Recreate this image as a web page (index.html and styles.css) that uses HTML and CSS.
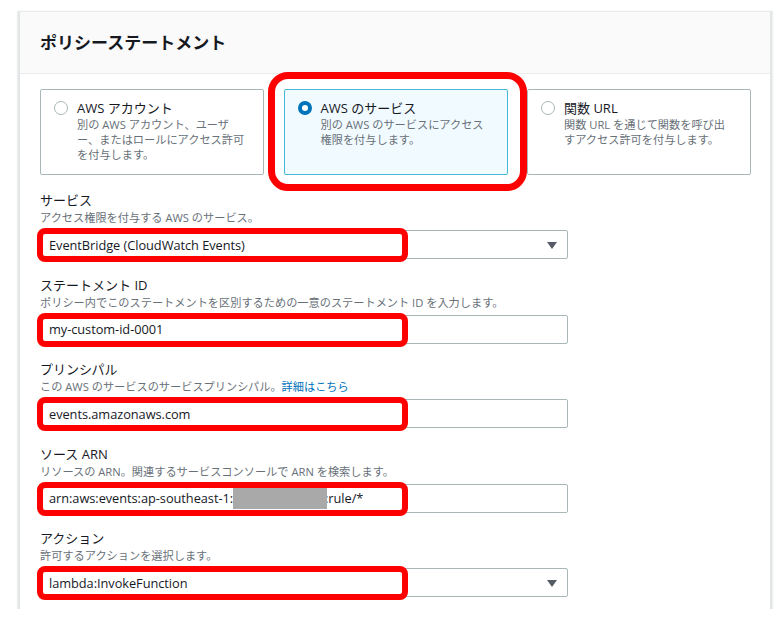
FILE: index.html
```html
<!DOCTYPE html>
<html lang="ja">
<head>
<meta charset="utf-8">
<title>ポリシーステートメント</title>
<link rel="stylesheet" href="styles.css">
</head>
<body>
<div class="page">
  <section class="panel">
    <header class="panel-header">
      <h2 class="panel-title">ポリシーステートメント</h2>
    </header>
    <div class="panel-body">
      <div class="cards">
        <div class="card">
          <span class="radio"></span>
          <div class="card-text">
            <div class="card-title">AWS アカウント</div>
            <div class="card-desc">別の AWS アカウント、ユーザ<br>ー、またはロールにアクセス許可<br>を付与します。</div>
          </div>
        </div>
        <div class="card card-selected">
          <span class="radio radio-on"></span>
          <div class="card-text">
            <div class="card-title">AWS のサービス</div>
            <div class="card-desc">別の AWS のサービスにアクセス<br>権限を付与します。</div>
          </div>
          <span class="mark mark-card"></span>
        </div>
        <div class="card">
          <span class="radio"></span>
          <div class="card-text">
            <div class="card-title">関数 URL</div>
            <div class="card-desc">関数 URL を通じて関数を呼び出<br>すアクセス許可を付与します。</div>
          </div>
        </div>
      </div>

      <div class="fields">
        <div class="field">
          <div class="field-label">サービス</div>
          <div class="field-desc">アクセス権限を付与する AWS のサービス。</div>
          <div class="control select">
            <span class="value">EventBridge (CloudWatch Events)</span>
            <span class="caret"></span>
            <span class="mark mark-field"></span>
          </div>
        </div>
        <div class="field">
          <div class="field-label">ステートメント ID</div>
          <div class="field-desc">ポリシー内でこのステートメントを区別するための一意のステートメント ID を入力します。</div>
          <div class="control">
            <span class="value">my-custom-id-0001</span>
            <span class="mark mark-field"></span>
          </div>
        </div>
        <div class="field">
          <div class="field-label">プリンシパル</div>
          <div class="field-desc">この AWS のサービスのサービスプリンシパル。<a class="link" href="#">詳細はこちら</a></div>
          <div class="control">
            <span class="value">events.amazonaws.com</span>
            <span class="mark mark-field"></span>
          </div>
        </div>
        <div class="field">
          <div class="field-label">ソース ARN</div>
          <div class="field-desc">リソースの ARN。関連するサービスコンソールで ARN を検索します。</div>
          <div class="control">
            <span class="value">arn:aws:events:ap-southeast-1:<span class="redact"></span><span class="tail">:rule/*</span></span>
            <span class="mark mark-field"></span>
          </div>
        </div>
        <div class="field">
          <div class="field-label">アクション</div>
          <div class="field-desc">許可するアクションを選択します。</div>
          <div class="control select">
            <span class="value">lambda:InvokeFunction</span>
            <span class="caret"></span>
            <span class="mark mark-field"></span>
          </div>
        </div>
      </div>
    </div>
  </section>
</div>
</body>
</html>
```

FILE: styles.css
```css
* { box-sizing: border-box; }

html, body {
  margin: 0;
  padding: 0;
  background: #ffffff;
}

body {
  font-family: "Open Sans", "Noto Sans CJK JP", sans-serif;
  color: #16191f;
}

.page {
  padding: 11px 0 0 18px;
}

.panel {
  width: 754px;
  height: 598px;
  background: #ffffff;
  border-top: 1px solid #e9ecec;
  border-left: 2px solid #e2e6e6;
  border-right: 2px solid #e2e6e6;
  box-shadow: -1px 0 1px rgba(0, 28, 36, 0.07), 1px 0 1px rgba(0, 28, 36, 0.07);
}

.panel-header {
  height: 62px;
  background: #fafafa;
  border-bottom: 1px solid #eaeded;
  padding: 0 20px;
  display: flex;
  align-items: center;
}

.panel-title {
  margin: 0;
  font-size: 17px;
  font-weight: 700;
  line-height: 22px;
  color: #16191f;
}

.panel-body {
  padding: 15px 18px 0 20px;
}

.cards {
  display: grid;
  grid-template-columns: repeat(3, 224px);
  column-gap: 19.5px;
}

.card {
  position: relative;
  height: 86px;
  border: 1px solid #aab7b8;
  border-radius: 2px;
  padding: 9px 13px;
  display: flex;
  gap: 9px;
  background: #ffffff;
}

.card-selected {
  border-color: #44b9d6;
  background: #f1faff;
}

.radio {
  flex: none;
  width: 14px;
  height: 14px;
  margin-top: 2px;
  border-radius: 50%;
  border: 1.5px solid #aab7b8;
  background: #ffffff;
}

.radio-on {
  border: 4px solid #0073bb;
}

.card-title {
  font-size: 13px;
  line-height: 18px;
  color: #16191f;
}

.card-desc {
  font-size: 11.2px;
  line-height: 15px;
  color: #687078;
  white-space: nowrap;
}

.mark {
  position: absolute;
  border: 6px solid #ff0000;
  pointer-events: none;
}

.mark-card {
  left: -17px;
  top: -18px;
  right: -20px;
  bottom: -17px;
  border-width: 7px;
  border-radius: 20px;
}

.mark-field {
  left: -4px;
  top: -3px;
  width: 371px;
  height: 34px;
  border-radius: 8px;
}

.fields {
  margin-top: 15px;
  display: flex;
  flex-direction: column;
  gap: 15.5px;
}

.field-label {
  font-size: 13px;
  line-height: 20px;
  color: #16191f;
}

.field-desc {
  font-size: 11.2px;
  line-height: 16px;
  color: #687078;
}

.link {
  color: #0073bb;
  text-decoration: none;
}

.control {
  position: relative;
  margin-top: 4px;
  width: 528px;
  height: 29px;
  border: 1px solid #aab7b8;
  border-radius: 2px;
  background: #ffffff;
  padding: 0 8px;
  display: flex;
  align-items: center;
  font-size: 12.8px;
  color: #16191f;
}

.value {
  display: inline-flex;
  align-items: center;
  white-space: nowrap;
  letter-spacing: -0.05px;
}

.redact {
  position: relative;
  z-index: 1;
  display: inline-block;
  width: 94px;
  height: 21px;
  background: #a9a9a9;
}

.tail {
  margin-left: -2px;
}

.caret {
  position: absolute;
  right: 10px;
  top: 11px;
  width: 0;
  height: 0;
  border-left: 5px solid transparent;
  border-right: 5px solid transparent;
  border-top: 7px solid #545b64;
}
```
